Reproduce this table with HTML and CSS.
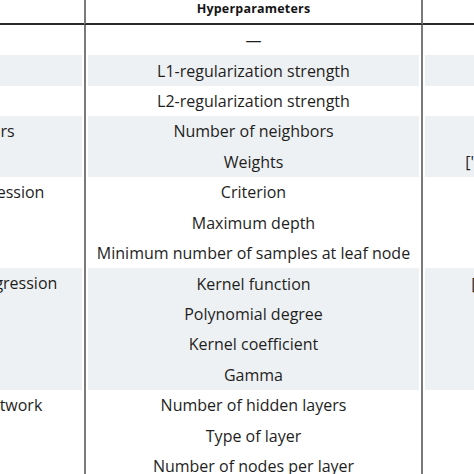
FILE: index.html
```html
<!DOCTYPE html>
<html>
<head>
<meta charset="utf-8">
<link rel="stylesheet" href="styles.css">
</head>
<body>
<div class="frame">
<table class="grid">
<colgroup><col class="c-model"><col class="c-hyper"><col class="c-values"></colgroup>
<thead>
<tr><th class="model">Model</th><th class="hyper">Hyperparameters</th><th class="values">Values</th></tr>
</thead>
<tbody>
<tr><td class="model">Linear regression</td><td class="hyper">—</td><td class="values">—</td></tr>
<tr class="shade"><td class="model">Lasso</td><td class="hyper">L1-regularization strength</td><td class="values">[0.001, 100]</td></tr>
<tr><td class="model">Ridge</td><td class="hyper">L2-regularization strength</td><td class="values">[0.001, 100]</td></tr>
<tr class="shade"><td class="model" rowspan="2">K-nearest neighbors</td><td class="hyper">Number of neighbors</td><td class="values">[1, 50]</td></tr>
<tr class="shade"><td class="hyper">Weights</td><td class="values">['uniform', 'distance']</td></tr>
<tr><td class="model" rowspan="3">Decision tree regression</td><td class="hyper">Criterion</td><td class="values">['mse', 'mae']</td></tr>
<tr><td class="hyper">Maximum depth</td><td class="values">[1, 20]</td></tr>
<tr><td class="hyper">Minimum number of samples at leaf node</td><td class="values">[1, 20]</td></tr>
<tr class="shade"><td class="model" rowspan="4">Support vector regression</td><td class="hyper">Kernel function</td><td class="values">['linear', 'poly', 'rbf']</td></tr>
<tr class="shade"><td class="hyper">Polynomial degree</td><td class="values">[2, 5]</td></tr>
<tr class="shade"><td class="hyper">Kernel coefficient</td><td class="values">[0.01, 10]</td></tr>
<tr class="shade"><td class="hyper">Gamma</td><td class="values">[0.001, 1]</td></tr>
<tr><td class="model" rowspan="3">Artificial neural network</td><td class="hyper">Number of hidden layers</td><td class="values">[1, 5]</td></tr>
<tr><td class="hyper">Type of layer</td><td class="values">Dense</td></tr>
<tr><td class="hyper">Number of nodes per layer</td><td class="values">[8, 256]</td></tr>
</tbody>
</table>
</div>
</body>
</html>
```
FILE: styles.css
```css
html, body {
  margin: 0;
  padding: 0;
  background: #fff;
}
.frame {
  width: 474px;
  height: 474px;
  overflow: hidden;
}
.grid {
  margin-left: -140px;
  border-collapse: separate;
  border-spacing: 0;
  table-layout: fixed;
  width: 803px;
  font-family: "Open Sans", "Liberation Sans", sans-serif;
  font-size: 16px;
  color: #1e1e1e;
}
.c-model { width: 224px; }
.c-hyper { width: 339px; }
.c-values { width: 240px; }
.grid th {
  height: 14px;
  padding: 2px 0 7px 0;
  font-size: 12.5px;
  letter-spacing: 0.2px;
  font-weight: 700;
  color: #151515;
  line-height: 14px;
  vertical-align: top;
  border-bottom: 2px solid #2a2a2a;
  text-align: center;
  white-space: nowrap;
}
.grid td {
  height: 30.43px;
  padding: 0;
  line-height: 30px;
  white-space: nowrap;
  overflow: hidden;
}
.grid td.model {
  text-align: left;
  vertical-align: top;
  padding-left: 4px;
}
.grid .hyper {
  text-align: center;
  border-left: 2px solid #7a7a7a;
  border-right: 2px solid #7a7a7a;
}
.grid .values {
  text-align: center;
}
.shade td {
  background: #eef1f3;
}
.shade td.model {
  box-shadow: inset -2px 0 0 #fff;
}
.shade td.hyper {
  box-shadow: inset 2px 0 0 #fff, inset -2px 0 0 #fff;
}
.shade td.values {
  box-shadow: inset 2px 0 0 #fff;
}
```
